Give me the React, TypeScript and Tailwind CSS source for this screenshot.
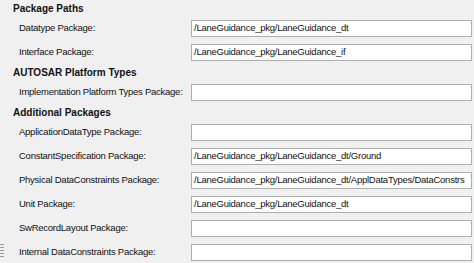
import React from "react"

type Row = { label: string; value?: string }

const sections: { title: string; rows: Row[] }[] = [
  {
    title: "Package Paths",
    rows: [
      { label: "Datatype Package:", value: "/LaneGuidance_pkg/LaneGuidance_dt" },
      { label: "Interface Package:", value: "/LaneGuidance_pkg/LaneGuidance_if" },
    ],
  },
  {
    title: "AUTOSAR Platform Types",
    rows: [{ label: "Implementation Platform Types Package:" }],
  },
  {
    title: "Additional Packages",
    rows: [
      { label: "ApplicationDataType Package:" },
      { label: "ConstantSpecification Package:", value: "/LaneGuidance_pkg/LaneGuidance_dt/Ground" },
      {
        label: "Physical DataConstraints Package:",
        value: "/LaneGuidance_pkg/LaneGuidance_dt/ApplDataTypes/DataConstrs",
      },
      { label: "Unit Package:", value: "/LaneGuidance_pkg/LaneGuidance_dt" },
      { label: "SwRecordLayout Package:" },
      { label: "Internal DataConstraints Package:" },
    ],
  },
]

function Field({ label, value }: Row) {
  return (
    <div className="flex h-[24px] items-center">
      <div className="w-[191px] shrink-0 pl-[19px] text-[9.5px] tracking-[-0.25px] text-[#111]">{label}</div>
      <div className="flex h-[17px] w-[281px] items-center border border-[#adadad] bg-white pl-[2px] text-[9.5px] tracking-[-0.25px] text-[#111]">
        {value}
      </div>
    </div>
  )
}

export default function App() {
  return (
    <div
      className="relative h-[263px] w-[474px] overflow-hidden bg-[#f0f0f0]"
      style={{ fontFamily: '"Liberation Sans", Arial, sans-serif' }}
    >
      {sections.map((s) => (
        <div key={s.title}>
          <div className="flex h-[16px] items-center pl-[13px] text-[10px] font-bold text-[#111]">{s.title}</div>
          {s.rows.map((r) => (
            <Field key={r.label} {...r} />
          ))}
        </div>
      ))}

      {/* splitter grip at the left edge */}
      <div className="absolute left-0 top-[244px] flex flex-col gap-[2px]">
        <div className="h-px w-[4px] bg-[#9a9a9a]" />
        <div className="h-px w-[4px] bg-[#9a9a9a]" />
        <div className="h-px w-[4px] bg-[#9a9a9a]" />
        <div className="h-px w-[4px] bg-[#9a9a9a]" />
        <div className="h-px w-[4px] bg-[#9a9a9a]" />
      </div>
    </div>
  )
}
